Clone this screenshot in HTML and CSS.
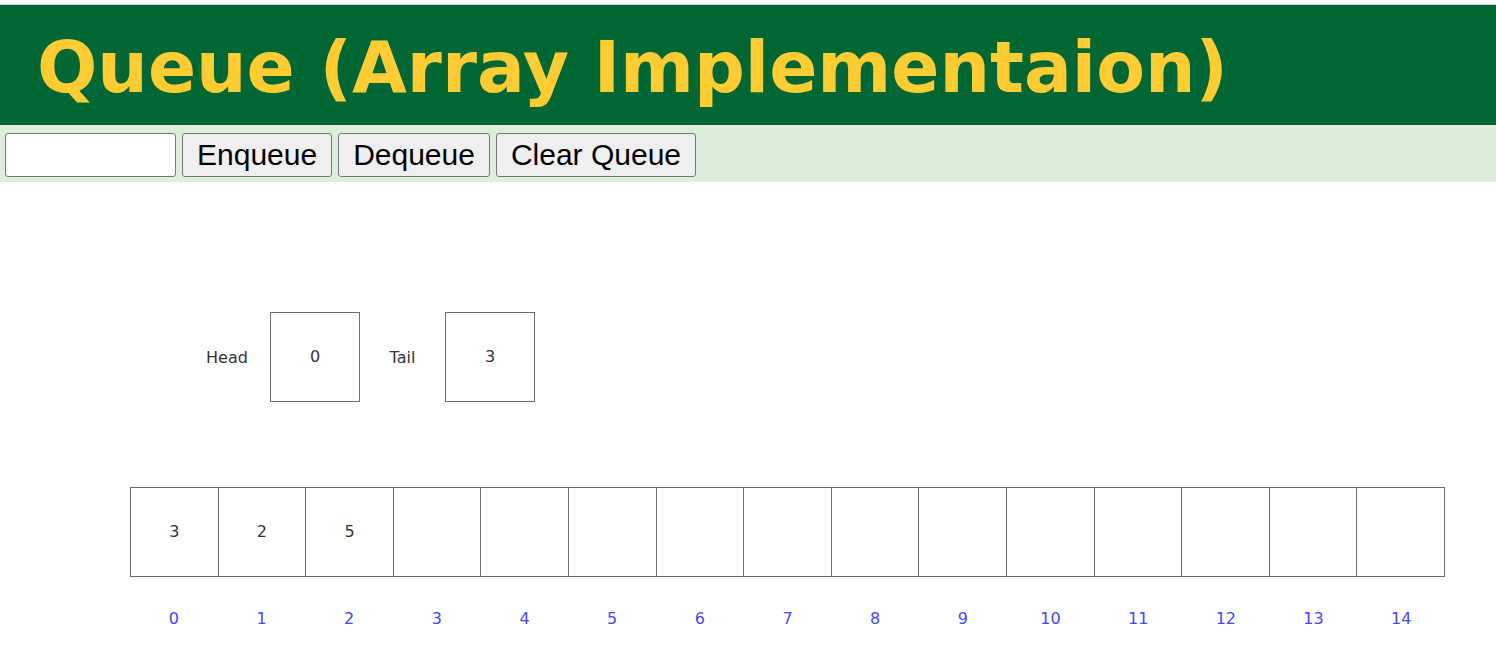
FILE: index.html
```html
<!DOCTYPE html>
<html>
<head>
<meta charset="utf-8">
<title>Queue (Array Implementaion)</title>
<link rel="stylesheet" href="styles.css">
</head>
<body>
<header class="banner">
  <h1 class="title">Queue (Array Implementaion)</h1>
</header>
<div class="toolbar">
  <input class="field" type="text">
  <button class="btn">Enqueue</button>
  <button class="btn">Dequeue</button>
  <button class="btn">Clear Queue</button>
</div>
<main class="canvas">
  <div class="pointers">
    <span class="label label-head">Head</span>
    <div class="box">0</div>
    <span class="label label-tail">Tail</span>
    <div class="box">3</div>
  </div>
  <div class="array">
    <div class="cell">3</div>
    <div class="cell">2</div>
    <div class="cell">5</div>
    <div class="cell"></div>
    <div class="cell"></div>
    <div class="cell"></div>
    <div class="cell"></div>
    <div class="cell"></div>
    <div class="cell"></div>
    <div class="cell"></div>
    <div class="cell"></div>
    <div class="cell"></div>
    <div class="cell"></div>
    <div class="cell"></div>
    <div class="cell"></div>
  </div>
  <div class="indices">
    <span>0</span><span>1</span><span>2</span><span>3</span><span>4</span>
    <span>5</span><span>6</span><span>7</span><span>8</span><span>9</span>
    <span>10</span><span>11</span><span>12</span><span>13</span><span>14</span>
  </div>
</main>
</body>
</html>
```
FILE: styles.css
```css
html, body {
  margin: 0;
  padding: 0;
  background: #ffffff;
}

body {
  font-family: "DejaVu Sans", Verdana, sans-serif;
  padding-top: 4px;
}

.banner {
  background: #006633;
  border-top: 1px solid #d4d4d4;
  height: 121px;
  box-sizing: border-box;
  padding: 21px 0 0 37px;
}

.title {
  margin: 0;
  font-family: "DejaVu Sans", Verdana, sans-serif;
  font-weight: bold;
  font-size: 71px;
  line-height: normal;
  color: #ffcc33;
  white-space: nowrap;
}

.toolbar {
  background: #ddeedd;
  height: 57px;
  box-sizing: border-box;
  padding: 8px 0 0 5px;
  display: flex;
  align-items: flex-start;
  gap: 6px;
}

.field {
  width: 171px;
  height: 44px;
  box-sizing: border-box;
  margin: 0;
  border: 1px solid #767676;
  border-radius: 3px;
  background: #ffffff;
  font-family: "Liberation Sans", Arial, sans-serif;
  font-size: 30px;
}

.btn {
  height: 44px;
  box-sizing: border-box;
  margin: 0;
  padding: 0 14px;
  border: 1px solid #767676;
  border-radius: 3px;
  background: #efefef;
  color: #000000;
  font-family: "Liberation Sans", Arial, sans-serif;
  font-size: 30px;
  line-height: 1;
}

.canvas {
  padding-top: 130px;
  font-size: 16px;
  color: #333333;
}

.pointers {
  display: flex;
  align-items: center;
  margin-left: 184px;
  height: 90px;
}

.label {
  text-align: center;
}

.label-head {
  width: 86px;
}

.label-tail {
  width: 85px;
}

.box {
  width: 90px;
  height: 90px;
  box-sizing: border-box;
  border: 1px solid #6e6e6e;
  display: flex;
  align-items: center;
  justify-content: center;
  padding-bottom: 2px;
}

.array {
  margin: 85px 0 0 130px;
  width: 1315px;
  height: 90px;
  box-sizing: border-box;
  display: grid;
  grid-template-columns: repeat(15, 1fr);
  border: 1px solid #6e6e6e;
  border-left: none;
}

.cell {
  border-left: 1px solid #6e6e6e;
  display: flex;
  align-items: center;
  justify-content: center;
  padding-bottom: 2px;
}

.indices {
  margin: 31px 0 0 130px;
  width: 1315px;
  display: grid;
  grid-template-columns: repeat(15, 1fr);
  line-height: 22px;
  color: #4646ff;
  text-align: center;
}
```
